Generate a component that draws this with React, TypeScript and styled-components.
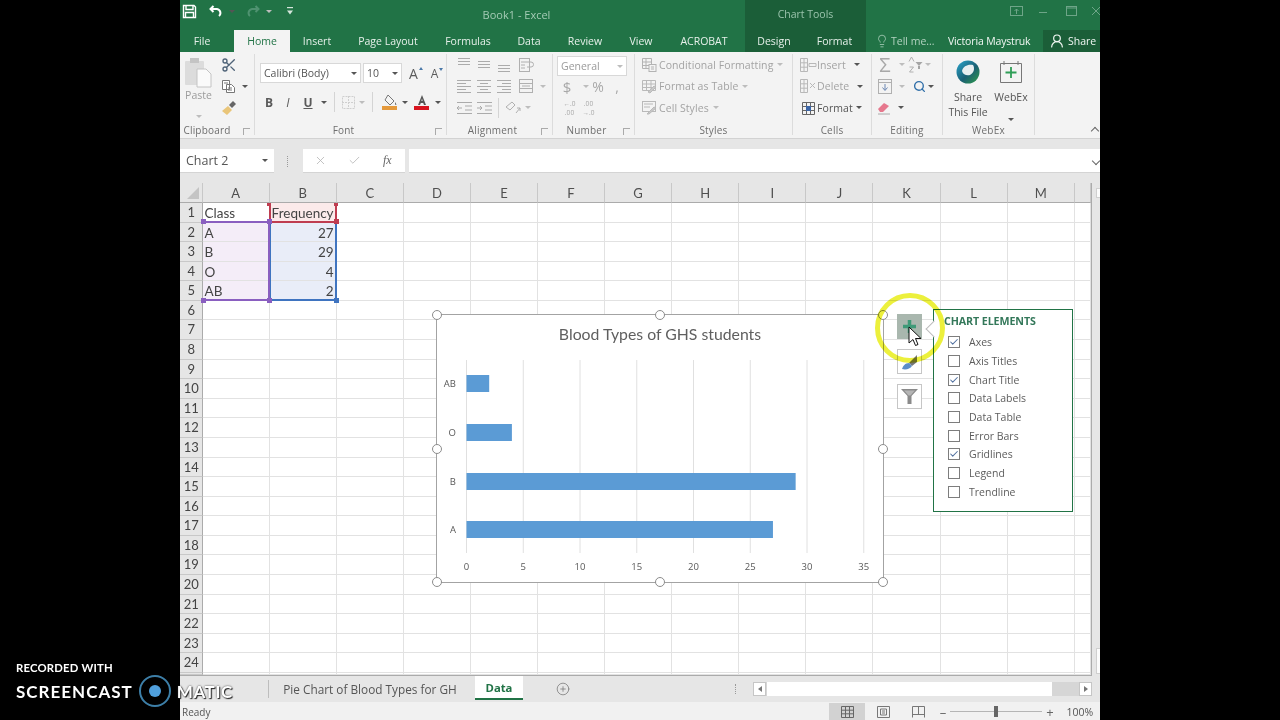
import React from 'react';
import styled, { createGlobalStyle } from 'styled-components';
import { Check, CirclePlus, Lightbulb, Scissors, Search, UserRound, X } from 'lucide-react';

const GlobalStyle = createGlobalStyle`
  html, body { margin: 0; padding: 0; background: #000; overflow: hidden; }
  * { box-sizing: border-box; }
`;

const UI = '"Open Sans", "Noto Sans", sans-serif';
const CELL = 'Lato, "Open Sans", sans-serif';
const GREEN = '#217346';
const DARK_GREEN = '#1b5e38';

const Stage = styled.div`
  position: relative;
  width: 1280px;
  height: 720px;
  display: flex;
  justify-content: center;
  background: #000;
  overflow: hidden;
  font-family: ${UI};
  filter: blur(0.3px);
`;
const Excel = styled.div`
  width: 920px;
  height: 720px;
  display: flex;
  flex-direction: column;
  background: #e6e6e6;
`;

/* title bar */
const TitleBar = styled.div`
  height: 27px;
  display: flex;
  background: ${GREEN};
  flex-shrink: 0;
`;
const Qat = styled.div`
  width: 120px;
  display: flex;
  align-items: center;
  padding: 0 0 5px 2px;
  gap: 5px;
`;
const DocTitle = styled.div`
  width: 445px;
  padding-right: 12px;
  text-align: center;
  line-height: 29px;
  font-size: 11px;
  color: #a4cbb5;
`;
const ToolsTitle = styled.div`
  width: 121px;
  background: ${DARK_GREEN};
  text-align: center;
  line-height: 29px;
  font-size: 10.5px;
  color: #9cc4ad;
`;
const WinControls = styled.div`
  flex: 1;
  display: flex;
  align-items: flex-start;
  padding: 4px 0 0 143px;
  overflow: hidden;
`;
const WinBtn = styled.div<{ $w: number }>`
  width: ${({ $w }) => $w}px;
  height: 13px;
  flex-shrink: 0;
  display: flex;
  align-items: center;
  justify-content: center;
`;

/* tabs */
const TabBar = styled.div`
  height: 25px;
  display: flex;
  background: ${GREEN};
  flex-shrink: 0;
`;
const Tab = styled.div<{ $w: number; $active?: boolean; $tool?: boolean; $gap?: number }>`
  width: ${({ $w }) => $w}px;
  margin-right: ${({ $gap }) => $gap || 0}px;
  height: ${({ $active }) => ($active ? '22px' : '25px')};
  margin-top: ${({ $active }) => ($active ? '3px' : '0')};
  line-height: ${({ $active }) => ($active ? '23px' : '28px')};
  text-align: center;
  font-size: 10.5px;
  color: ${({ $active }) => ($active ? GREEN : '#e6f0ea')};
  background: ${({ $active, $tool }) => ($active ? '#f3f3f3' : $tool ? DARK_GREEN : 'transparent')};
`;
const TellMe = styled.div`
  margin-left: 9px;
  width: 73px;
  display: flex;
  align-items: center;
  gap: 2px;
  padding-top: 3px;
  font-size: 10.5px;
  color: #b3d3c1;
`;
const UserName = styled.div`
  line-height: 28px;
  font-size: 10.5px;
  letter-spacing: -0.15px;
  color: #f1f7f3;
`;
const ShareBlock = styled.div`
  margin-left: auto;
  width: 57px;
  margin-top: 3px;
  display: flex;
  align-items: center;
  gap: 3px;
  padding-left: 6px;
  font-size: 10.5px;
  color: #f1f7f3;
  background: ${DARK_GREEN};
`;

/* ribbon */
const Ribbon = styled.div`
  position: relative;
  height: 87px;
  display: flex;
  background: #f3f3f3;
  border-bottom: 1px solid #d2d2d2;
  flex-shrink: 0;
  color: #444;
`;
const Group = styled.div<{ $w: number; $last?: boolean }>`
  position: relative;
  width: ${({ $w }) => $w}px;
  margin: 2px 0 3px;
  display: flex;
  flex-direction: column;
  border-right: ${({ $last }) => ($last ? 'none' : '1px solid #dcdcdc')};
`;
const GroupBody = styled.div<{ $pad?: string }>`
  height: 71px;
  padding: ${({ $pad }) => $pad || '0'};
  display: flex;
  flex-direction: column;
`;
const GroupLabel = styled.div<{ $pr?: number }>`
  height: 10px;
  line-height: 10px;
  padding-right: ${({ $pr }) => $pr || 0}px;
  text-align: center;
  font-size: 10px;
  letter-spacing: 0.2px;
  color: #6e6e6e;
`;
const Launcher = styled.div`
  position: absolute;
  right: 4px;
  bottom: 0;
  width: 7px;
  height: 7px;
  border-left: 1px solid #aaa;
  border-top: 1px solid #aaa;
`;
const Row = styled.div<{ $pad?: number; $dim?: boolean; $gap?: number }>`
  height: 21.5px;
  display: flex;
  align-items: center;
  padding-left: ${({ $pad }) => $pad || 0}px;
  gap: ${({ $gap }) => $gap || 0}px;
  font-size: 10.5px;
  letter-spacing: 0.08px;
  white-space: nowrap;
  color: ${({ $dim }) => ($dim ? '#a3a3a3' : '#555')};
`;
const Slot = styled.div<{ $w: number; $ml?: number }>`
  width: ${({ $w }) => $w}px;
  margin-left: ${({ $ml }) => $ml || 0}px;
  height: 20px;
  flex-shrink: 0;
  display: flex;
  align-items: center;
  justify-content: center;
`;
const Caret = styled.span<{ $dim?: boolean; $ml?: number }>`
  display: inline-block;
  flex-shrink: 0;
  width: 0;
  height: 0;
  margin-left: ${({ $ml }) => $ml || 0}px;
  border-left: 3px solid transparent;
  border-right: 3px solid transparent;
  border-top: 3px solid ${({ $dim }) => ($dim ? '#bdbdbd' : '#555')};
`;
const VSep = styled.div<{ $mx: number; $h?: number }>`
  width: 1px;
  height: ${({ $h }) => $h || 20}px;
  margin: 0 ${({ $mx }) => $mx}px;
  background: #d4d4d4;
  flex-shrink: 0;
`;
const ClipRow = styled.div`
  display: flex;
  height: 71px;
`;
const PasteCol = styled.div`
  width: 37px;
  display: flex;
  flex-direction: column;
  align-items: center;
  padding-top: 3px;
  font-size: 10.5px;
  line-height: 14px;
  color: #9b9b9b;
`;
const PasteCaret = styled.div`
  margin-top: 5px;
`;
const ClipTools = styled.div`
  display: flex;
  flex-direction: column;
  padding-left: 3px;
`;
const FontRow = styled.div<{ $mt?: number }>`
  height: 20px;
  margin-top: ${({ $mt }) => $mt || 0}px;
  display: flex;
  align-items: center;
  padding-left: 5px;
`;
const ComboBox = styled.div<{ $w: number; $ml?: number; $dim?: boolean }>`
  width: ${({ $w }) => $w}px;
  margin-left: ${({ $ml }) => $ml || 0}px;
  height: 20px;
  display: flex;
  align-items: center;
  justify-content: space-between;
  padding: 0 3px 0 3px;
  font-size: 10.5px;
  color: ${({ $dim }) => ($dim ? '#9a9a9a' : '#555')};
  background: #fff;
  border: 1px solid #d8d8d8;
`;
const StyleLetter = styled.span<{ $bold?: boolean; $italic?: boolean; $under?: boolean }>`
  font-size: 12px;
  font-family: ${UI};
  font-weight: ${({ $bold, $under }) => ($bold || $under ? 700 : 400)};
  font-style: ${({ $italic }) => ($italic ? 'italic' : 'normal')};
  text-decoration: ${({ $under }) => ($under ? 'underline' : 'none')};
  color: #5a5a5a;
`;
const GrowFont = styled.span`
  position: relative;
  font-size: 14px;
  color: #5b5b5b;
  &::after {
    content: '';
    position: absolute;
    right: -5px;
    top: 3px;
    border-left: 2.5px solid transparent;
    border-right: 2.5px solid transparent;
    border-bottom: 3px solid #4a78a8;
  }
`;
const ShrinkFont = styled.span`
  position: relative;
  font-size: 12px;
  color: #5b5b5b;
  &::after {
    content: '';
    position: absolute;
    right: -5px;
    top: 3px;
    border-left: 2.5px solid transparent;
    border-right: 2.5px solid transparent;
    border-top: 3px solid #4a78a8;
  }
`;
const NumGlyph = styled.span<{ $size?: number; $w?: number }>`
  font-size: ${({ $size }) => $size || 14}px;
  width: ${({ $w }) => ($w ? `${$w}px` : 'auto')};
  text-align: center;
  color: #a8a8a8;
`;
const DecimalStack = styled.div<{ $w: number }>`
  width: ${({ $w }) => $w}px;
  display: flex;
  flex-direction: column;
  gap: 1px;
  font-size: 6.5px;
  line-height: 8px;
  text-align: center;
  color: #a8a8a8;
`;
const BigTools = styled.div`
  height: 71px;
  display: flex;
  padding-top: 6px;
`;
const BigButton = styled.div<{ $w: number }>`
  width: ${({ $w }) => $w}px;
  display: flex;
  flex-direction: column;
  align-items: center;
  font-size: 10.5px;
  line-height: 15px;
  color: #555;
  text-align: center;
  svg { margin-bottom: 6px; }
`;
const CollapseArrow = styled.div`
  position: absolute;
  right: 2px;
  bottom: 4px;
  width: 6px;
  height: 6px;
  border-left: 1.5px solid #666;
  border-top: 1.5px solid #666;
  transform: rotate(45deg);
`;

/* formula bar */
const FormulaBar = styled.div`
  height: 44px;
  padding-top: 10px;
  display: flex;
  flex-shrink: 0;
  background: #e6e6e6;
`;
const NameBox = styled.div`
  width: 94px;
  height: 24px;
  display: flex;
  align-items: center;
  justify-content: space-between;
  padding: 0 6px;
  font-size: 12.5px;
  color: #555;
  background: #fff;
  border-bottom: 1px solid #d4d4d4;
`;
const Dots = styled.div`
  width: 3px;
  height: 11px;
  border-left: 1px dotted #9a9a9a;
`;
const DotsCell = styled.div`
  width: 29px;
  height: 24px;
  display: flex;
  align-items: center;
  justify-content: center;
`;
const FxBox = styled.div`
  width: 102px;
  height: 24px;
  display: flex;
  align-items: center;
  padding-left: 11px;
  gap: 21px;
  color: #b5b5b5;
  background: #fff;
  border-bottom: 1px solid #d4d4d4;
`;
const FxText = styled.span`
  margin-left: 1px;
  font-family: "Liberation Serif", serif;
  font-style: italic;
  font-size: 12px;
  color: #666;
`;
const FormulaInput = styled.div`
  flex: 1;
  height: 24px;
  margin-left: 4px;
  display: flex;
  align-items: center;
  justify-content: flex-end;
  padding-right: 1px;
  background: #fff;
  border-bottom: 1px solid #d4d4d4;
`;
const Chevron = styled.div`
  width: 6px;
  height: 6px;
  border-right: 1px solid #666;
  border-bottom: 1px solid #666;
  transform: rotate(45deg);
`;

/* sheet */
const SheetArea = styled.div`
  height: 493px;
  display: flex;
  flex-shrink: 0;
`;
const Sheet = styled.div`
  position: relative;
  width: 912px;
  display: grid;
  grid-template-columns: 22.5px repeat(13, 67.1px) 1fr;
  grid-template-rows: 20px repeat(24, 19.59px) 1fr;
  background: #fff;
  border-right: 1px solid #ababab;
  border-bottom: 1px solid #ababab;
  overflow: hidden;
  font-family: ${CELL};
  font-size: 13.5px;
  color: #444;
`;
const Corner = styled.div`
  position: relative;
  background: #e6e6e6;
  border-bottom: 1px solid #ababab;
  border-right: 1px solid #c8c8c8;
  &::after {
    content: '';
    position: absolute;
    right: 3px;
    bottom: 3px;
    border-left: 12px solid transparent;
    border-bottom: 12px solid #c4c4c4;
  }
`;
const ColHead = styled.div`
  background: #e6e6e6;
  border-right: 1px solid #c8c8c8;
  border-bottom: 1px solid #ababab;
  text-align: center;
  line-height: 20px;
  font-size: 13px;
  color: #505050;
`;
const RowHead = styled.div`
  background: #e6e6e6;
  border-right: 1px solid #ababab;
  border-bottom: 1px solid #c8c8c8;
  padding-left: 1px;
  text-align: center;
  line-height: 19.5px;
  font-size: 13px;
  color: #444;
`;
const Cell = styled.div<{ $tint?: string; $right?: boolean }>`
  padding: 0 2px;
  line-height: 20px;
  text-align: ${({ $right }) => ($right ? 'right' : 'left')};
  white-space: nowrap;
  background: ${({ $tint }) => $tint || '#fff'};
  border-right: 1px solid #e2e2e2;
  border-bottom: 1px solid #e2e2e2;
`;
const RangeBox = styled.div<{ $l: number; $t: number; $w: number; $h: number; $c: string; $noTop?: boolean; $noLeft?: boolean }>`
  position: absolute;
  left: ${({ $l }) => $l}px;
  top: ${({ $t }) => $t}px;
  width: ${({ $w }) => $w}px;
  height: ${({ $h }) => $h}px;
  border: 2px solid ${({ $c }) => $c};
  border-top-color: ${({ $c, $noTop }) => ($noTop ? 'transparent' : $c)};
  border-left-color: ${({ $c, $noLeft }) => ($noLeft ? 'transparent' : $c)};
`;
const RangeHandle = styled.div<{ $x: number; $y: number; $c: string; $small?: boolean }>`
  position: absolute;
  left: ${({ $x, $small }) => $x - ($small ? 2 : 2.5)}px;
  top: ${({ $y, $small }) => $y - ($small ? 1.5 : 2.5)}px;
  width: ${({ $small }) => ($small ? 4 : 5)}px;
  height: ${({ $small }) => ($small ? 3 : 5)}px;
  background: ${({ $c }) => $c};
`;
const VScroll = styled.div`
  flex: 1;
  display: flex;
  flex-direction: column;
  justify-content: space-between;
  align-items: flex-end;
  padding: 5px 0 2px;
`;
const VScrollEnd = styled.div<{ $h: number }>`
  width: 4px;
  height: ${({ $h }) => $h}px;
  background: #fbfbfb;
  border: 1px solid #cfcfcf;
  border-right: none;
`;

/* chart */
const Chart = styled.div`
  position: absolute;
  left: 256px;
  top: 131px;
  width: 448px;
  height: 269px;
  padding-top: 9px;
  background: #fff;
  border: 1px solid #a3a3a3;
`;
const ChartTitle = styled.div`
  height: 21px;
  line-height: 20px;
  text-align: center;
  font-family: ${CELL};
  font-size: 15.8px;
  color: #5f5f5f;
`;
const ChartSvg = styled.svg`
  display: block;
  font-family: ${UI};
  font-size: 9.5px;
  fill: #595959;
`;
const Handle = styled.div<{ $x: string; $y: string }>`
  position: absolute;
  left: ${({ $x }) => $x};
  top: ${({ $y }) => $y};
  width: 10px;
  height: 10px;
  margin: -5px 0 0 -5px;
  background: #fff;
  border: 1.5px solid #8c8c8c;
  border-radius: 50%;
`;
const ChartButtons = styled.div`
  position: absolute;
  left: 717px;
  top: 131px;
  display: flex;
  flex-direction: column;
  gap: 10px;
`;
const ChartButton = styled.div<{ $active?: boolean }>`
  width: 25px;
  height: 25px;
  display: flex;
  align-items: center;
  justify-content: center;
  background: ${({ $active }) => ($active ? '#a9b7ae' : '#fff')};
  border: 1px solid ${({ $active }) => ($active ? '#a9b7ae' : '#c6c6c6')};
`;
const Popup = styled.div`
  position: absolute;
  left: 753px;
  top: 126px;
  width: 140px;
  height: 203px;
  padding: 4px 0 0 10px;
  background: #fff;
  border: 1px solid ${GREEN};
  font-family: ${UI};
  &::before {
    content: '';
    position: absolute;
    left: -6px;
    top: 13px;
    width: 11px;
    height: 11px;
    background: #fff;
    border-left: 1px solid #bbb;
    border-bottom: 1px solid #bbb;
    transform: rotate(45deg);
  }
`;
const PopupTitle = styled.div`
  height: 15px;
  line-height: 14px;
  margin-bottom: 4px;
  font-size: 10.7px;
  font-weight: 700;
  letter-spacing: -0.1px;
  color: #34785a;
`;
const PopupItem = styled.div`
  height: 18.7px;
  display: flex;
  align-items: center;
  gap: 9px;
  padding-left: 4px;
  font-size: 10.5px;
  color: #5c5c5c;
`;
const CheckBox = styled.div`
  width: 12px;
  height: 12px;
  display: flex;
  align-items: center;
  justify-content: center;
  border: 1px solid #7d7d7d;
  color: #50709f;
`;
const YellowRing = styled.div`
  position: absolute;
  left: 695px;
  top: 110px;
  width: 70px;
  height: 70px;
  border: 5px solid #ecf03c;
  border-radius: 50%;
  mix-blend-mode: multiply;
`;
const Pointer = styled.svg`
  position: absolute;
  left: 728px;
  top: 143px;
`;

/* sheet tabs */
const SheetTabs = styled.div`
  height: 26px;
  display: flex;
  align-items: center;
  flex-shrink: 0;
  background: #e6e6e6;
`;
const TabSpacer = styled.div`
  width: 89px;
  height: 18px;
  border-right: 1px solid #bdbdbd;
`;
const SheetTab = styled.div`
  width: 202px;
  margin-right: 4px;
  text-align: center;
  font-size: 11.8px;
  color: #555;
`;
const ActiveSheetTab = styled.div`
  width: 48px;
  height: 24px;
  margin-bottom: 2px;
  text-align: center;
  line-height: 24px;
  font-size: 11.3px;
  font-weight: 700;
  color: ${GREEN};
  background: #fff;
  border-bottom: 2px solid ${GREEN};
`;
const AddSheet = styled.div`
  width: 18px;
  margin-left: 31px;
  display: flex;
  justify-content: center;
  color: #777;
`;
const TabDots = styled.div`
  width: 3px;
  height: 10px;
  margin-left: 163px;
  border-left: 1px dotted #999;
`;
const HScroll = styled.div`
  height: 14px;
  width: 339px;
  margin-left: 15px;
  display: flex;
  background: #d6d6d6;
`;
const ScrollBtn = styled.div<{ $flip?: boolean }>`
  width: 13px;
  display: flex;
  align-items: center;
  justify-content: center;
  background: #fff;
  border: 1px solid #c6c6c6;
  &::after {
    content: '';
    border-top: 3.5px solid transparent;
    border-bottom: 3.5px solid transparent;
    border-left: ${({ $flip }) => ($flip ? '0' : '4px solid #777')};
    border-right: ${({ $flip }) => ($flip ? '4px solid #777' : '0')};
  }
`;
const ScrollThumb = styled.div`
  width: 285px;
  margin: 0 1px;
  background: #fff;
`;
const ScrollRest = styled.div`
  flex: 1;
`;

/* status bar */
const StatusBar = styled.div`
  height: 18px;
  display: flex;
  align-items: center;
  flex-shrink: 0;
  padding: 1px 0 0 2px;
  font-size: 10px;
  color: #555;
  background: #f1f1f1;
`;
const ViewBtn = styled.div<{ $active?: boolean; $w: number; $ml?: number }>`
  width: ${({ $w }) => $w}px;
  height: 18px;
  margin-left: ${({ $ml }) => $ml || 0}px;
  display: flex;
  align-items: center;
  justify-content: center;
  background: ${({ $active }) => ($active ? '#d2d2d2' : 'transparent')};
`;
const ZoomSign = styled.div<{ $ml: number }>`
  margin-left: ${({ $ml }) => $ml}px;
  width: 9px;
  text-align: center;
  font-size: 13px;
  line-height: 18px;
  color: #666;
`;
const Slider = styled.div`
  position: relative;
  width: 92px;
  height: 1px;
  margin-left: 3px;
  background: #b5b5b5;
`;
const SliderKnob = styled.div`
  position: absolute;
  left: 44px;
  top: -5px;
  width: 4px;
  height: 11px;
  background: #666;
`;
const ZoomPct = styled.div`
  margin-left: 12px;
  font-size: 10.5px;
`;

/* recorder watermark */
const Watermark = styled.div`
  position: absolute;
  left: 16px;
  top: 661px;
  color: #fff;
  font-family: Lato, "Open Sans", sans-serif;
  font-weight: 700;
`;
const WmSmall = styled.div`
  font-size: 11.3px;
  line-height: 14px;
  letter-spacing: 0.2px;
`;
const WmLine = styled.div`
  display: flex;
  align-items: center;
  height: 32px;
  font-size: 17px;
  letter-spacing: 1px;
`;
const WmRing = styled.div`
  width: 32px;
  height: 32px;
  margin: 0 6px 0 6px;
  display: flex;
  align-items: center;
  justify-content: center;
  border: 2px solid #3d7fa8;
  border-radius: 50%;
`;
const WmDot = styled.div`
  width: 12px;
  height: 12px;
  border-radius: 50%;
  background: #4f9fdc;
`;
const WmMatic = styled.span`
  text-shadow: 0 0 2px #333, 1px 1px 1px #222;
  letter-spacing: 0.6px;
`;

/* drawings */
const SaveIcon = () => (
  <svg width="15" height="15" viewBox="0 0 15 15" fill="none" stroke="#fff" strokeWidth="1.4">
    <path d="M1.500 1.500h10.500l1.500 1.500v10.500h-12z" />
    <path d="M4 1.500v4h7v-4M3.500 13.500v-5h8v5" />
  </svg>
);
const UndoIcon = ({ color, flip }: { color: string; flip?: boolean }) => (
  <svg width="14" height="12" viewBox="0 0 14 12" fill="none" stroke={color} strokeWidth="2">
    <g transform={flip ? 'translate(14 0) scale(-1 1)' : undefined}>
      <path d="M4.500 1 1.500 4l3 3" />
      <path d="M2 4h6a4 4 0 0 1 2 7" />
    </g>
  </svg>
);
const CustomizeIcon = () => (
  <svg width="8" height="9" viewBox="0 0 8 9" fill="#d5e6dc">
    <rect x="1" y="0" width="6" height="1.200" />
    <path d="M1 3.500h6L4 7.500z" />
  </svg>
);
const RibbonDisplayIcon = () => (
  <svg width="13" height="10" viewBox="0 0 13 10" fill="none" stroke="#6ea588">
    <rect x="0.500" y="0.500" width="12" height="9" />
    <path d="M6.500 8V3M4.500 5l2-2 2 2" />
  </svg>
);
const MinIcon = () => (
  <svg width="10" height="10" viewBox="0 0 10 10" stroke="#6ea588"><path d="M1 6.500h8" /></svg>
);
const MaxIcon = () => (
  <svg width="11" height="10" viewBox="0 0 11 10" fill="none" stroke="#6ea588">
    <rect x="0.500" y="0.500" width="10" height="9" />
    <path d="M0.500 2h10" />
  </svg>
);
const CloseIcon = () => (
  <svg width="10" height="10" viewBox="0 0 10 10" stroke="#6ea588"><path d="M1 1l8 8M9 1l-8 8" /></svg>
);
const Lines = ({ rows, color = '#ababab' }: { rows: number[][]; color?: string }) => (
  <svg width="18" height="16" viewBox="0 0 18 16" stroke={color} strokeWidth="1">
    {rows.map(([a, b, y], i) => (
      <line key={i} x1={a} x2={b} y1={y + 0.5} y2={y + 0.5} />
    ))}
  </svg>
);
const TOP = [[3, 15, 1], [3, 15, 4], [3, 15, 7]];
const MID = [[3, 15, 4], [3, 15, 7], [3, 15, 10]];
const BOT = [[3, 15, 8], [3, 15, 11], [3, 15, 14]];
const LEFT = [[2, 16, 2], [2, 11, 5], [2, 16, 8], [2, 11, 11], [2, 16, 14]];
const CENTER = [[2, 16, 2], [5, 13, 5], [2, 16, 8], [5, 13, 11], [2, 16, 14]];
const RIGHT = [[2, 16, 2], [7, 16, 5], [2, 16, 8], [7, 16, 11], [2, 16, 14]];

const PasteIcon = () => (
  <svg width="29" height="31" viewBox="0 0 29 31">
    <rect x="1" y="4" width="19" height="24" rx="1" fill="#dcdcdc" />
    <rect x="6" y="1" width="9" height="5" fill="#c4c4c4" />
    <path d="M13 12h9l5 5v13H13z" fill="#fafafa" stroke="#c4c4c4" />
  </svg>
);
const CopyIcon = () => (
  <svg width="15" height="15" viewBox="0 0 15 15" fill="#fff" stroke="#777">
    <path d="M1.500 1.500h7v9h-7zM5.500 5.500h5l3 3v5h-8z" />
    <path d="M3 4h4M7 9h4M7 11h4" />
  </svg>
);
const BrushIcon = () => (
  <svg width="16" height="16" viewBox="0 0 16 16">
    <path d="M1 11 7 6l4 4-5 5z" fill="#e9c579" />
    <path d="M8 5l4-4 3 3-4 4z" fill="#666" />
  </svg>
);
const BordersIcon = () => (
  <svg width="13" height="13" viewBox="0 0 13 13" fill="none" stroke="#cfcfcf" strokeDasharray="2 1">
    <rect x="0.500" y="0.500" width="12" height="12" />
    <path d="M6.500 0v13M0 6.500h13" />
  </svg>
);
const FillIcon = () => (
  <svg width="16" height="16" viewBox="0 0 16 16">
    <path d="M6 1l6 6-4 4-5-5z" fill="#f5f5f5" stroke="#777" />
    <path d="M13 8c1 2 2 3 1 3s-1-1-1-3z" fill="#555" />
    <rect x="0" y="12" width="15" height="4" fill="#e59a3c" />
  </svg>
);
const FontColorIcon = () => (
  <svg width="16" height="16" viewBox="0 0 16 16">
    <path d="M8 1 4 11h2l.8-2h2.400l.8 2h2zM7.400 7 8 4.600 8.600 7z" fill="#555" />
    <rect x="0" y="12" width="15" height="4" fill="#d8141f" />
  </svg>
);
const WrapIcon = () => (
  <svg width="16" height="16" viewBox="0 0 16 16" fill="none" stroke="#b0b0b0">
    <rect x="1.500" y="1.500" width="10" height="13" />
    <path d="M3 5h10a2 2 0 0 1 0 5H9M3 8h4M3 11h4" />
  </svg>
);
const MergeIcon = () => (
  <svg width="16" height="14" viewBox="0 0 16 14" fill="none" stroke="#b0b0b0">
    <rect x="1.500" y="0.500" width="13" height="13" />
    <path d="M1.500 4.500h13M1.500 9.500h13M4 7h8" />
  </svg>
);
const IndentIcon = ({ flip }: { flip?: boolean }) => (
  <svg width="17" height="14" viewBox="0 0 17 14" stroke="#ababab" fill="none">
    <path d="M1 1.500h15M1 12.500h15" />
    {flip ? <path d="M9 5h7M9 9h7M1 7h5M4 5l2 2-2 2" /> : <path d="M9 5h7M9 9h7M1 7h5M3 5 1 7l2 2" />}
  </svg>
);
const OrientIcon = () => (
  <svg width="18" height="14" viewBox="0 0 18 14" fill="none" stroke="#b0b0b0">
    <path d="M2 6l6-5 3 3-5 5zM12 12l4-5M13 7h3v3" />
  </svg>
);
const CondIcon = () => (
  <svg width="16" height="15" viewBox="0 0 16 15" fill="none" stroke="#b3b3b3">
    <path d="M1.500 1.500h9v10h-9zM1.500 5h9M1.500 8.500h9M5 1.500v10" />
    <rect x="8" y="7.500" width="7" height="7" fill="#f3f3f3" />
    <path d="M10 10h3M10 12h3" />
  </svg>
);
const TableIcon = () => (
  <svg width="16" height="15" viewBox="0 0 16 15" fill="none" stroke="#b9b9b9">
    <path d="M1.500 1.500h13v10h-13zM1.500 5h13M1.500 8.500h13M5.500 1.500v10M10 1.500v10" />
    <path d="M7 13l6-6 2 1-6 6z" fill="#c8c8c8" />
  </svg>
);
const CellStyleIcon = () => (
  <svg width="16" height="15" viewBox="0 0 16 15" fill="none" stroke="#b9b9b9">
    <rect x="1.500" y="1.500" width="13" height="10" />
    <path d="M3 4h9M3 7h6" />
    <path d="M6 14l7-7 2 1-7 6z" fill="#c8c8c8" />
  </svg>
);
const InsertCellIcon = () => (
  <svg width="18" height="16" viewBox="0 0 18 16" fill="none" stroke="#b8b8b8">
    <path d="M1.500 1.500h7v13h-7zM1.500 5.800h7M1.500 10.200h7M5 1.500v13M10 6.500h7v3h-7z" />
  </svg>
);
const DeleteCellIcon = () => (
  <svg width="18" height="16" viewBox="0 0 18 16" fill="none" stroke="#b8b8b8">
    <path d="M1.500 1.500h7v13h-7zM1.500 5.800h7M1.500 10.200h7M5 1.500v13M11 5l5 5M16 5l-5 5" />
  </svg>
);
const FormatCellIcon = () => (
  <svg width="15" height="15" viewBox="0 0 15 15" fill="none" stroke="#666">
    <path d="M1.500 2.500h12v12h-12zM1.500 6.500h12M1.500 10.500h12M5.500 2.500v12M9.500 2.500v12" />
    <rect x="5" y="6" width="5" height="5" fill="#3c66a8" stroke="none" />
  </svg>
);
const SortIcon = () => (
  <svg width="15" height="17" viewBox="0 0 15 17">
    <path d="M1 5.500 3.500 1 6 5.500M1.500 11h4l-4 5h4" fill="none" stroke="#b0b0b0" />
    <path d="M7.500 6h7l-3.500 4z" fill="#a5a5a5" />
    <rect x="10" y="10" width="2" height="3" fill="#a5a5a5" />
  </svg>
);
const FillDownIcon = () => (
  <svg width="14" height="15" viewBox="0 0 14 15" fill="none" stroke="#b0b0b0">
    <rect x="0.500" y="0.500" width="13" height="14" />
    <path d="M0.500 3.500h13" />
    <path d="M7 5v6M4.500 8.500 7 11.500l2.500-3" stroke="#6d88b3" />
  </svg>
);
const EraserIcon = () => (
  <svg width="16" height="14" viewBox="0 0 16 14">
    <path d="M1 8l6-6 5 3-6 6H3z" fill="#e6788d" />
    <path d="M1 13h12" stroke="#aaa" />
  </svg>
);
const WebExLogo = () => (
  <svg width="24" height="24" viewBox="0 0 24 24">
    <defs>
      <linearGradient id="wx" x1="0" y1="0" x2="1" y2="1">
        <stop offset="0" stopColor="#2aa6cf" />
        <stop offset="0.55" stopColor="#1b5f73" />
        <stop offset="1" stopColor="#2f9e47" />
      </linearGradient>
    </defs>
    <circle cx="12" cy="12" r="11.500" fill="url(#wx)" />
    <path d="M6 11c1-5 6-7 11-6 2 3 1 8-3 10-3 1-7 0-8-4z" fill="#e8eef0" />
  </svg>
);
const WebExAdd = () => (
  <svg width="24" height="24" viewBox="0 0 24 24" fill="none">
    <path d="M1.500 3.500h21v19h-21z" stroke="#777" />
    <path d="M5 1v4M19 1v4" stroke="#777" />
    <path d="M12 7v11M6.500 12.500h11" stroke="#2f9e57" strokeWidth="1.800" />
  </svg>
);
const GridIcon = () => (
  <svg width="13" height="12" viewBox="0 0 13 12" fill="none" stroke="#666">
    <path d="M.5.500h12v11H.5zM.5 4.200h12M.5 7.800h12M4.500.500v11M8.500.500v11" />
  </svg>
);
const PageIcon = () => (
  <svg width="13" height="12" viewBox="0 0 13 12" fill="none" stroke="#777">
    <path d="M.5.500h12v11H.5zM3.500 3h6v6h-6z" />
    <path d="M5 5h3M5 7h3" />
  </svg>
);
const BreakIcon = () => (
  <svg width="13" height="12" viewBox="0 0 13 12" fill="none" stroke="#777">
    <path d="M.5 11.500v-11h12v11M.5 8.500h12M6.500.500v8" />
  </svg>
);
const PlusGlyph = () => (
  <svg width="15" height="15" viewBox="0 0 15 15" stroke="#3f9a78" strokeWidth="3.500">
    <path d="M7.500 1v13M1 7.500h13" />
  </svg>
);
const ChartBrush = () => (
  <svg width="19" height="19" viewBox="0 0 19 19">
    <path d="M9 11 17 3v7l-5 4z" fill="#777" />
    <path d="M2 17c1-3 3-6 7-6l3 3c-2 3-6 4-10 3z" fill="#5b8ec9" />
  </svg>
);
const ChartFunnel = () => (
  <svg width="19" height="19" viewBox="0 0 19 19">
    <path d="M1 2h17l-6.500 7v8h-4V9z" fill="#8a8a8a" />
    <path d="M4 3.500h11l-4.500 5h-2z" fill="#b5b5b5" />
  </svg>
);

const COLS = 'ABCDEFGHIJKLM'.split('');
const CELLS: Record<string, string> = {
  A1: 'Class', B1: 'Frequency', A2: 'A', B2: '27', A3: 'B', B3: '29', A4: 'O', B4: '4', A5: 'AB', B5: '2',
};
const ELEMENTS: [string, boolean][] = [
  ['Axes', true], ['Axis Titles', false], ['Chart Title', true], ['Data Labels', false], ['Data Table', false],
  ['Error Bars', false], ['Gridlines', true], ['Legend', false], ['Trendline', false],
];
const BARS: [string, number, number][] = [['AB', 2, 30], ['O', 4, 79], ['B', 29, 128], ['A', 27, 176]];
const TICKS = [0, 5, 10, 15, 20, 25, 30, 35];
const PER_UNIT = 11.35;
const HANDLES: [string, string][] = [
  ['0', '0'], ['50%', '0'], ['100%', '0'], ['0', '50%'], ['100%', '50%'], ['0', '100%'], ['50%', '100%'], ['100%', '100%'],
];

const tintFor = (col: string, row: number) => {
  if (col === 'B' && row === 1) return '#fbeaea';
  if (col === 'A' && row >= 2 && row <= 5) return '#f4edf8';
  if (col === 'B' && row >= 2 && row <= 5) return '#e9edf8';
  return undefined;
};

const ExcelChart = () => (
  <Chart>
    <ChartTitle>Blood Types of GHS students</ChartTitle>
    <ChartSvg width="446" height="237" viewBox="0 0 446 237">
      {TICKS.map((t) => (
        <g key={t}>
          <line x1={29.5 + t * PER_UNIT} x2={29.5 + t * PER_UNIT} y1="15" y2="208" stroke="#e0e0e0" />
          <text x={29.5 + t * PER_UNIT} y="225" textAnchor="middle">{t}</text>
        </g>
      ))}
      {BARS.map(([name, value, y]) => (
        <g key={name}>
          <rect x="29.5" y={y} width={value * PER_UNIT} height="17" fill="#5b9bd5" />
          <text x="19" y={y + 12} textAnchor="end">{name}</text>
        </g>
      ))}
    </ChartSvg>
    {HANDLES.map(([x, y]) => (
      <Handle key={x + y} $x={x} $y={y} />
    ))}
  </Chart>
);

const RibbonGroups = () => (
  <Ribbon>
    <Group $w={75}>
      <ClipRow>
        <PasteCol>
          <PasteIcon />
          <span>Paste</span>
          <PasteCaret><Caret $dim /></PasteCaret>
        </PasteCol>
        <ClipTools>
          <Row><Slot $w={17}><Scissors size={16} color="#4f6378" /></Slot></Row>
          <Row><Slot $w={17}><CopyIcon /></Slot><Caret $ml={5} /></Row>
          <Row><Slot $w={17}><BrushIcon /></Slot></Row>
        </ClipTools>
      </ClipRow>
      <GroupLabel $pr={20}>Clipboard</GroupLabel>
      <Launcher />
    </Group>

    <Group $w={192}>
      <GroupBody $pad="9px 0 0">
        <FontRow>
          <ComboBox $w={101}>Calibri (Body)<Caret /></ComboBox>
          <ComboBox $w={39} $ml={2}>10<Caret /></ComboBox>
          <Slot $w={21} $ml={1}><GrowFont>A</GrowFont></Slot>
          <Slot $w={21}><ShrinkFont>A</ShrinkFont></Slot>
        </FontRow>
        <FontRow $mt={9}>
          <Slot $w={16} $ml={1}><StyleLetter $bold>B</StyleLetter></Slot>
          <Slot $w={20} $ml={1}><StyleLetter $italic>I</StyleLetter></Slot>
          <Slot $w={20}><StyleLetter $under>U</StyleLetter></Slot>
          <Caret $ml={3} />
          <VSep $mx={7} />
          <BordersIcon />
          <Caret $dim $ml={4} />
          <VSep $mx={7} />
          <Slot $w={16} $ml={2}><FillIcon /></Slot>
          <Caret $ml={4} />
          <Slot $w={18} $ml={5}><FontColorIcon /></Slot>
          <Caret $ml={4} />
        </FontRow>
      </GroupBody>
      <GroupLabel $pr={14}>Font</GroupLabel>
      <Launcher />
    </Group>

    <Group $w={106}>
      <GroupBody>
        <Row $pad={7}>
          <Slot $w={20}><Lines rows={TOP} /></Slot>
          <Slot $w={20}><Lines rows={MID} /></Slot>
          <Slot $w={20}><Lines rows={BOT} /></Slot>
          <Slot $w={20} $ml={2}><WrapIcon /></Slot>
        </Row>
        <Row $pad={7}>
          <Slot $w={20}><Lines rows={LEFT} /></Slot>
          <Slot $w={20}><Lines rows={CENTER} /></Slot>
          <Slot $w={20}><Lines rows={RIGHT} /></Slot>
          <Slot $w={20} $ml={2}><MergeIcon /></Slot>
          <Caret $dim $ml={4} />
        </Row>
        <Row $pad={7}>
          <Slot $w={20}><IndentIcon /></Slot>
          <Slot $w={20}><IndentIcon flip /></Slot>
          <VSep $mx={4} />
          <Slot $w={20}><OrientIcon /></Slot>
          <Caret $dim $ml={2} />
        </Row>
      </GroupBody>
      <GroupLabel $pr={14}>Alignment</GroupLabel>
      <Launcher />
    </Group>

    <Group $w={82}>
      <GroupBody $pad="2px 0 0 4px">
        <ComboBox $w={70} $dim>General<Caret $dim /></ComboBox>
        <Row $pad={4}>
          <NumGlyph $size={15} $w={12}>$</NumGlyph>
          <Caret $dim $ml={10} />
          <NumGlyph $size={14} $w={18}>%</NumGlyph>
          <NumGlyph $size={14} $w={20}>,</NumGlyph>
        </Row>
        <Row $pad={3}>
          <DecimalStack $w={19}><span>←.0</span><span>.00</span></DecimalStack>
          <DecimalStack $w={19}><span>.00</span><span>→.0</span></DecimalStack>
        </Row>
      </GroupBody>
      <GroupLabel $pr={14}>Number</GroupLabel>
      <Launcher />
    </Group>

    <Group $w={158}>
      <GroupBody>
        <Row $pad={6} $dim $gap={2}>
          <Slot $w={16}><CondIcon /></Slot>Conditional Formatting<Caret $dim $ml={2} />
        </Row>
        <Row $pad={6} $dim $gap={2}>
          <Slot $w={16}><TableIcon /></Slot>Format as Table<Caret $dim $ml={2} />
        </Row>
        <Row $pad={6} $dim $gap={2}>
          <Slot $w={16}><CellStyleIcon /></Slot>Cell Styles<Caret $dim $ml={2} />
        </Row>
      </GroupBody>
      <GroupLabel>Styles</GroupLabel>
    </Group>

    <Group $w={79}>
      <GroupBody>
        <Row $pad={6} $dim>
          <Slot $w={18}><InsertCellIcon /></Slot>Insert<Caret $ml={8} />
        </Row>
        <Row $pad={6} $dim>
          <Slot $w={18}><DeleteCellIcon /></Slot>Delete<Caret $ml={8} />
        </Row>
        <Row $pad={6}>
          <Slot $w={18}><FormatCellIcon /></Slot>Format<Caret $ml={3} />
        </Row>
      </GroupBody>
      <GroupLabel>Cells</GroupLabel>
    </Group>

    <Group $w={71}>
      <GroupBody>
        <Row $pad={4}>
          <Slot $w={18}><NumGlyph $size={20}>Σ</NumGlyph></Slot>
          <Caret $dim $ml={5} />
          <Slot $w={16} $ml={2}><SortIcon /></Slot>
          <Caret $dim $ml={2} />
        </Row>
        <Row $pad={4}>
          <Slot $w={18}><FillDownIcon /></Slot>
          <Caret $dim $ml={5} />
          <Slot $w={16} $ml={6}><Search size={13} color="#2f6ea8" strokeWidth={2.5} /></Slot>
          <Caret $ml={1} />
        </Row>
        <Row $pad={4}>
          <Slot $w={18}><EraserIcon /></Slot>
          <Caret $ml={4} />
        </Row>
      </GroupBody>
      <GroupLabel>Editing</GroupLabel>
    </Group>

    <Group $w={92}>
      <BigTools>
        <BigButton $w={50}>
          <WebExLogo />
          <span>Share<br />This File</span>
        </BigButton>
        <BigButton $w={36}>
          <WebExAdd />
          <span>WebEx</span>
          <PasteCaret><Caret /></PasteCaret>
        </BigButton>
      </BigTools>
      <GroupLabel>WebEx</GroupLabel>
    </Group>
    <CollapseArrow />
  </Ribbon>
);

const App = () => (
  <Stage>
    <GlobalStyle />
    <Excel>
      <TitleBar>
        <Qat>
          <SaveIcon />
          <Slot $w={16} $ml={6}><UndoIcon color="#fff" /></Slot>
          <Caret />
          <Slot $w={16} $ml={5}><UndoIcon color="#4f9270" flip /></Slot>
          <Caret $dim />
          <Slot $w={8} $ml={9}><CustomizeIcon /></Slot>
        </Qat>
        <DocTitle>Book1 - Excel</DocTitle>
        <ToolsTitle>Chart Tools</ToolsTitle>
        <WinControls>
          <WinBtn $w={14}><RibbonDisplayIcon /></WinBtn>
          <WinBtn $w={40}><MinIcon /></WinBtn>
          <WinBtn $w={16}><MaxIcon /></WinBtn>
          <WinBtn $w={34}><CloseIcon /></WinBtn>
        </WinControls>
      </TitleBar>
      <TabBar>
        <Tab $w={44} $gap={10}>File</Tab>
        <Tab $w={56} $active>Home</Tab>
        <Tab $w={54}>Insert</Tab>
        <Tab $w={88}>Page Layout</Tab>
        <Tab $w={72}>Formulas</Tab>
        <Tab $w={50}>Data</Tab>
        <Tab $w={62}>Review</Tab>
        <Tab $w={50}>View</Tab>
        <Tab $w={76} $gap={3}>ACROBAT</Tab>
        <Tab $w={58} $tool>Design</Tab>
        <Tab $w={63} $tool>Format</Tab>
        <TellMe><Lightbulb size={14} strokeWidth={1.3} />Tell me...</TellMe>
        <UserName>Victoria Maystruk</UserName>
        <ShareBlock><UserRound size={16} strokeWidth={1.8} />Share</ShareBlock>
      </TabBar>
      <RibbonGroups />
      <FormulaBar>
        <NameBox>Chart 2<Caret /></NameBox>
        <DotsCell><Dots /></DotsCell>
        <FxBox>
          <X size={13} strokeWidth={1.5} />
          <Check size={13} strokeWidth={1.5} />
          <FxText>fx</FxText>
        </FxBox>
        <FormulaInput><Chevron /></FormulaInput>
      </FormulaBar>
      <SheetArea>
        <Sheet>
          <Corner />
          {COLS.map((c) => <ColHead key={c}>{c}</ColHead>)}
          <ColHead />
          {Array.from({ length: 25 }, (_, i) => i + 1).map((row) => (
            <React.Fragment key={row}>
              <RowHead>{row < 25 ? row : ''}</RowHead>
              {COLS.map((c) => (
                <Cell key={c} $tint={tintFor(c, row)} $right={c === 'B' && row > 1}>{CELLS[c + row]}</Cell>
              ))}
              <Cell />
            </React.Fragment>
          ))}
          <RangeBox $l={89} $t={38} $w={68} $h={80} $c="#3f74c0" />
          <RangeBox $l={89} $t={20} $w={68} $h={20} $c="#bf3d50" $noTop />
          <RangeBox $l={23} $t={38} $w={67} $h={80} $c="#8a5fc0" $noLeft />
          <RangeHandle $x={23} $y={38} $c="#8a5fc0" />
          <RangeHandle $x={89} $y={38} $c="#8a5fc0" />
          <RangeHandle $x={156} $y={38} $c="#bf3d50" />
          <RangeHandle $x={23} $y={117} $c="#8a5fc0" />
          <RangeHandle $x={89} $y={117} $c="#8a5fc0" />
          <RangeHandle $x={156} $y={117} $c="#3f74c0" />
          <RangeHandle $x={89} $y={21} $c="#bf3d50" $small />
          <RangeHandle $x={156} $y={21} $c="#bf3d50" $small />
          <ExcelChart />
          <ChartButtons>
            <ChartButton $active><PlusGlyph /></ChartButton>
            <ChartButton><ChartBrush /></ChartButton>
            <ChartButton><ChartFunnel /></ChartButton>
          </ChartButtons>
          <Popup>
            <PopupTitle>CHART ELEMENTS</PopupTitle>
            {ELEMENTS.map(([label, on]) => (
              <PopupItem key={label}>
                <CheckBox>{on && <Check size={10} strokeWidth={2.5} />}</CheckBox>
                {label}
              </PopupItem>
            ))}
          </Popup>
          <YellowRing />
          <Pointer width="14" height="21" viewBox="0 0 14 21">
            <path d="M1 1v16l4-3.500 2.500 6 2.500-1-2.500-6H13z" fill="#fff" stroke="#111" />
          </Pointer>
        </Sheet>
        <VScroll>
          <VScrollEnd $h={10} />
          <VScrollEnd $h={26} />
        </VScroll>
      </SheetArea>
      <SheetTabs>
        <TabSpacer />
        <SheetTab>Pie Chart of Blood Types for GH</SheetTab>
        <ActiveSheetTab>Data</ActiveSheetTab>
        <AddSheet><CirclePlus size={14} strokeWidth={1.3} /></AddSheet>
        <TabDots />
        <HScroll>
          <ScrollBtn $flip />
          <ScrollThumb />
          <ScrollRest />
          <ScrollBtn />
        </HScroll>
      </SheetTabs>
      <StatusBar>
        Ready
        <ViewBtn $active $w={36} $ml={619}><GridIcon /></ViewBtn>
        <ViewBtn $w={36}><PageIcon /></ViewBtn>
        <ViewBtn $w={34}><BreakIcon /></ViewBtn>
        <ZoomSign $ml={3}>–</ZoomSign>
        <Slider><SliderKnob /></Slider>
        <ZoomSign $ml={3}>+</ZoomSign>
        <ZoomPct>100%</ZoomPct>
      </StatusBar>
    </Excel>
    <Watermark>
      <WmSmall>RECORDED WITH</WmSmall>
      <WmLine>
        SCREENCAST
        <WmRing><WmDot /></WmRing>
        <WmMatic>MATIC</WmMatic>
      </WmLine>
    </Watermark>
  </Stage>
);

export default App;
